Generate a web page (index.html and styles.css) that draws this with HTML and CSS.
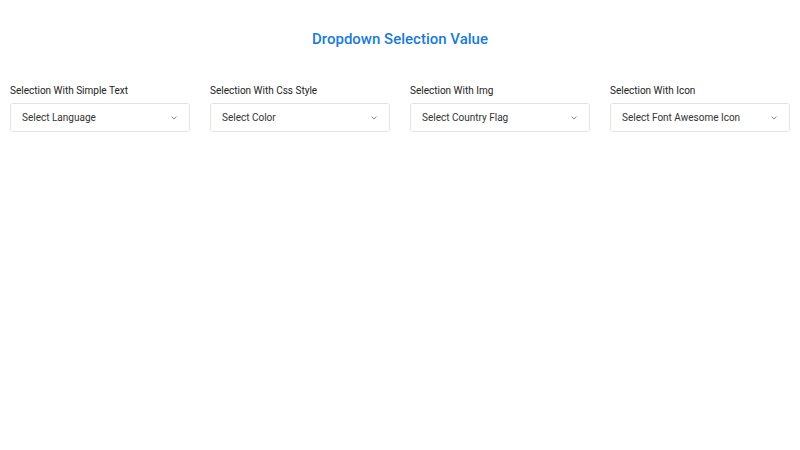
FILE: index.html
```html
<!DOCTYPE html>
<html>
<head>
<meta charset="utf-8">
<link rel="stylesheet" href="styles.css">
</head>
<body>
<h1 class="title">Dropdown Selection Value</h1>
<div class="row">
  <div class="col">
    <label class="label">Selection With Simple Text</label>
    <div class="select"><span>Select Language</span><svg class="chev" viewBox="0 0 6 4" width="6" height="4"><path d="M0.5 0.5 L3 3 L5.5 0.5" fill="none" stroke="#8a8a8a" stroke-width="1"/></svg></div>
  </div>
  <div class="col">
    <label class="label">Selection With Css Style</label>
    <div class="select"><span>Select Color</span><svg class="chev" viewBox="0 0 6 4" width="6" height="4"><path d="M0.5 0.5 L3 3 L5.5 0.5" fill="none" stroke="#8a8a8a" stroke-width="1"/></svg></div>
  </div>
  <div class="col">
    <label class="label">Selection With Img</label>
    <div class="select"><span>Select Country Flag</span><svg class="chev" viewBox="0 0 6 4" width="6" height="4"><path d="M0.5 0.5 L3 3 L5.5 0.5" fill="none" stroke="#8a8a8a" stroke-width="1"/></svg></div>
  </div>
  <div class="col">
    <label class="label">Selection With Icon</label>
    <div class="select"><span>Select Font Awesome Icon</span><svg class="chev" viewBox="0 0 6 4" width="6" height="4"><path d="M0.5 0.5 L3 3 L5.5 0.5" fill="none" stroke="#8a8a8a" stroke-width="1"/></svg></div>
  </div>
</div>
</body>
</html>
```
FILE: styles.css
```css
html, body {
  margin: 0;
  padding: 0;
  background: #fff;
  font-family: Roboto, "Liberation Sans", sans-serif;
}
.title {
  margin: 0;
  padding-top: 30px;
  height: 19px;
  line-height: 19px;
  text-align: center;
  font-size: 15px;
  font-weight: 500;
  color: #1a7bd6;
}
.row {
  display: grid;
  grid-template-columns: repeat(4, 1fr);
  margin-top: 35px;
}
.col {
  padding: 0 10px;
  display: flex;
  flex-direction: column;
}
.label {
  font-size: 10px;
  line-height: 13px;
  color: #222;
  margin-bottom: 6px;
}
.select {
  box-sizing: border-box;
  height: 29px;
  border: 1px solid #e3e3e3;
  border-radius: 3px;
  display: flex;
  align-items: center;
  justify-content: space-between;
  padding: 0 12px 0 11px;
  font-size: 10px;
  color: #333;
}
.chev {
  display: block;
}
```
